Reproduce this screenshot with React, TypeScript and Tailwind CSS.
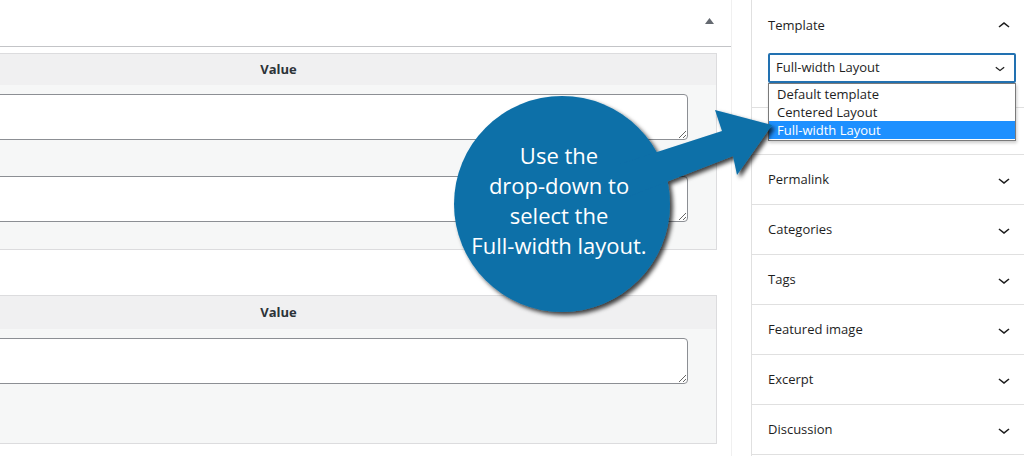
const sans = "font-['Open_Sans','Noto_Sans',sans-serif]";

function ChevronDown({ size = 24 }: { size?: number }) {
  return (
    <svg width={size} height={size} viewBox="0 0 24 24" fill="#1e1e1e">
      <path d="M17.5 11.6L12 16l-5.5-4.4.9-1.2L12 14l4.5-3.6 1 1.2z" />
    </svg>
  );
}

function ChevronUp() {
  return (
    <svg width={24} height={24} viewBox="0 0 24 24" fill="#1e1e1e">
      <path d="M6.5 12.4L12 8l5.5 4.4-.9 1.2L12 10l-4.5 3.6-1-1.2z" />
    </svg>
  );
}

function FieldRow({ last = false }: { last?: boolean }) {
  return (
    <div className={last ? "pl-4 pr-[28px] pt-[9px] pb-[59px]" : "pl-4 pr-[28px] pt-[9px] pb-[27px]"}>
      <textarea className="block h-[46px] w-full rounded-[4px] border border-[#8c8f94] bg-white" />
    </div>
  );
}

function Panel({ title }: { title: string }) {
  return (
    <div className="flex h-[50px] items-center justify-between border-b border-[#e0e0e0] pl-4 pr-[8px] pt-px">
      <span className="text-[13px] font-medium text-[#1e1e1e]">{title}</span>
      <ChevronDown />
    </div>
  );
}

function TemplatePanel() {
  return (
    <div className="border-b border-[#e0e0e0] pb-[24px] pl-4 pr-2">
      <div className="flex h-[48px] items-center justify-between pt-[3px]">
        <span className="text-[13px] font-medium text-[#1e1e1e]">Template</span>
        <ChevronUp />
      </div>
      <div className="relative mt-[5px]">
        <div className="flex h-[30px] items-center justify-between rounded-[2px] border-2 border-[#2271b1] pl-[6px] pr-[4px] text-[13px] text-[#1e1e1e]">
          <span>Full-width Layout</span>
          <ChevronDown size={20} />
        </div>
        <div className="absolute left-0 right-0 top-full z-10 border border-[#7a7a7a] bg-white py-px text-[13px] leading-[18px] text-[#1e1e1e] shadow-[1px_2px_3px_rgba(0,0,0,0.2)]">
          <div className="pl-2">Default template</div>
          <div className="pl-2">Centered Layout</div>
          <div className="bg-[#1e90ff] pl-2 text-white">Full-width Layout</div>
        </div>
      </div>
    </div>
  );
}

function Callout() {
  return (
    <div className="pointer-events-none absolute inset-0 z-20">
      <svg width={1024} height={456} className="absolute inset-0">
        <defs>
          <filter id="sh" x="-20%" y="-20%" width="140%" height="140%">
            <feDropShadow dx="3" dy="3" stdDeviation="2" floodColor="#000" floodOpacity="0.75" />
          </filter>
        </defs>
        <g filter="url(#sh)" fill="#0a6fa8">
          <circle cx="562" cy="204" r="108" />
          <polygon points="620,164 722,131 715,110 772,125 737,175 733,156 620,200" />
        </g>
      </svg>
      <div className="absolute left-[449px] top-[140px] w-[220px] text-center text-[22px] leading-[30px] text-white">
        <div>Use the</div>
        <div>drop-down to</div>
        <div>select the</div>
        <div>Full-width layout.</div>
      </div>
    </div>
  );
}

export default function App() {
  return (
    <div className={`relative flex h-[456px] w-[1024px] overflow-hidden bg-white ${sans}`}>
      <div className="w-[732px] shrink-0 overflow-hidden border-r border-[#f0f0f0]">
        <div className="flex h-[47px] items-center justify-end border-b border-[#c3c4c7] pb-1 pr-[17px]">
          <svg width={9} height={6} viewBox="0 0 9 6">
            <polygon points="4.5,0 9,6 0,6" fill="#646970" />
          </svg>
        </div>
        <div className="mt-[6px]">
          <div className="-ml-[160px] mr-[14px] border border-[#dcdcde] bg-[#f6f7f7]">
            <div className="flex h-[31px] items-center justify-center bg-[#f0f0f1] text-[13px] font-bold text-[#2c3338]">
              Value
            </div>
            <FieldRow />
            <FieldRow />
          </div>
        </div>
        <div className="mt-[45px]">
          <div className="-ml-[160px] mr-[14px] border border-[#dcdcde] bg-[#f6f7f7]">
            <div className="flex h-[33px] items-center justify-center bg-[#f0f0f1] text-[13px] font-bold text-[#2c3338]">
              Value
            </div>
            <FieldRow last />
          </div>
        </div>
      </div>
      <div className="ml-[19px] flex-1 border-l border-[#e0e0e0]">
        <TemplatePanel />
        <div className="h-[47px] border-b border-[#e0e0e0]" />
        <Panel title="Permalink" />
        <Panel title="Categories" />
        <Panel title="Tags" />
        <Panel title="Featured image" />
        <Panel title="Excerpt" />
        <Panel title="Discussion" />
      </div>
      <Callout />
    </div>
  );
}
